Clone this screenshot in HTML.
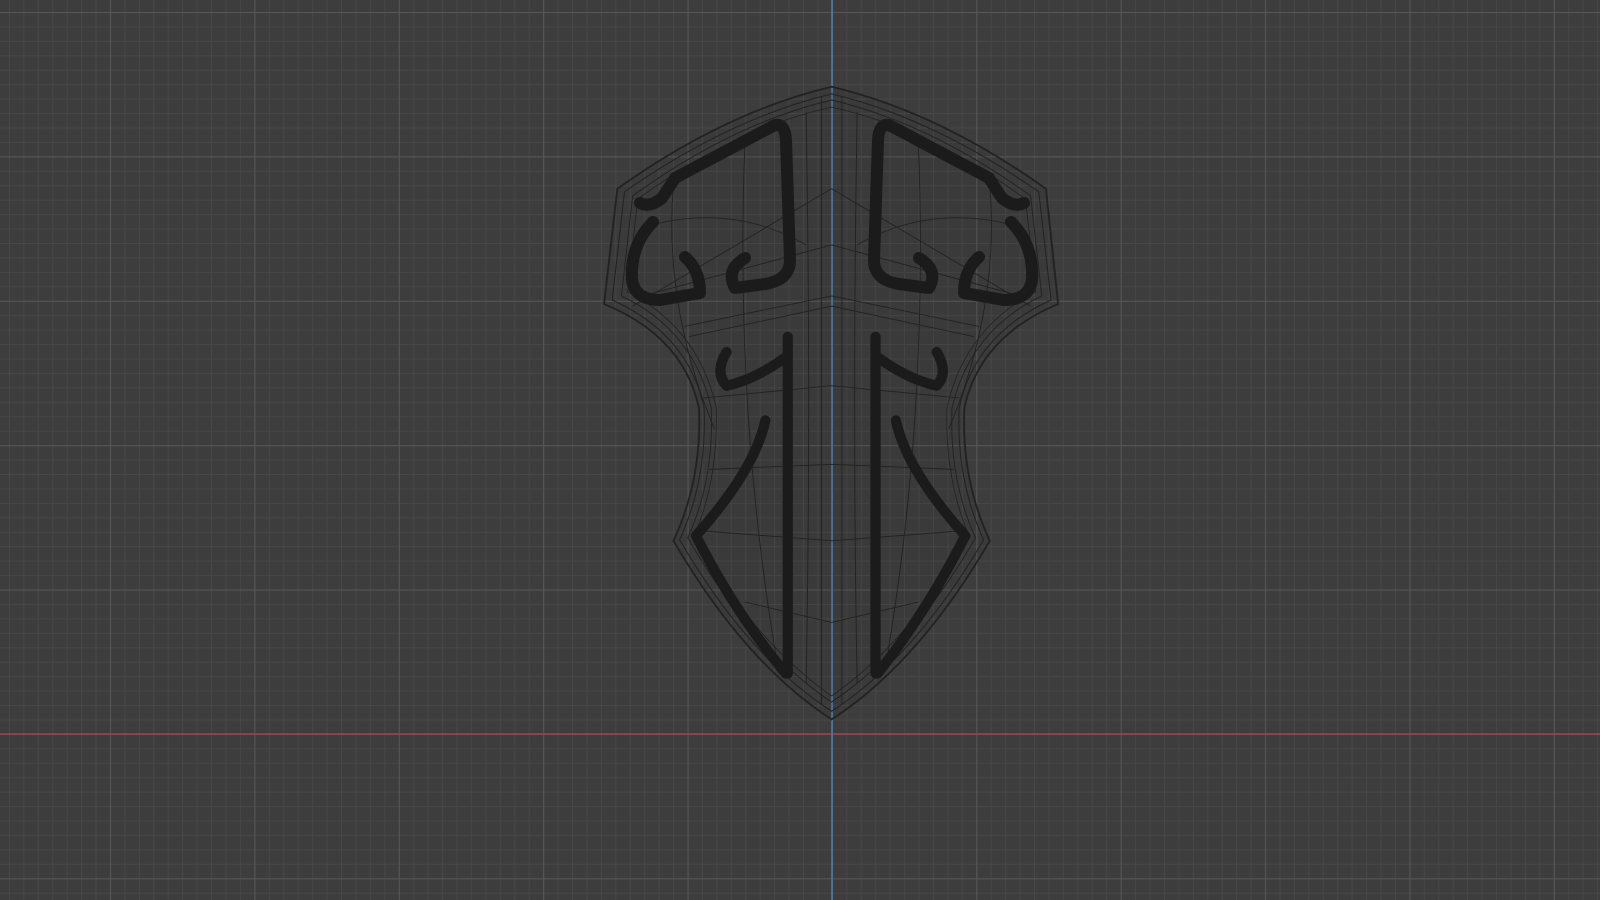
<!DOCTYPE html>
<html><head><meta charset="utf-8"><style>
html,body{margin:0;padding:0;width:1600px;height:900px;overflow:hidden;background:#3d3d3d}
.g{position:absolute;left:0;top:0;width:1600px;height:900px;
background-image:
linear-gradient(to right,#575757 1px,transparent 1px),
linear-gradient(to bottom,#575757 1px,transparent 1px),
linear-gradient(to right,#474747 1px,transparent 1px),
linear-gradient(to bottom,#474747 1px,transparent 1px);
background-size:144.4px 144.4px,144.4px 144.4px,14.44px 14.44px,14.44px 14.44px;
background-position:110px 12px,110px 12px,110px 12px,110px 12px}
svg{position:absolute;left:0;top:0}
</style></head><body>
<div class="g"></div>
<svg width="1600" height="900" viewBox="0 0 1600 900">
<line x1="0" y1="734" x2="1600" y2="734" stroke="#9a4550" stroke-width="1.5"/>
<line x1="832" y1="0" x2="832" y2="900" stroke="#4d7fae" stroke-width="1.5"/>
<g transform="scale(1.0204)" fill="none" stroke="#222">
<path d="M815,85 Q920,110 1025,185 L1037,298 Q960,330 945,400 Q942,470 970,530 Q900,650 815,705 Q730,650 660,530 Q688,470 685,400 Q670,330 592,298 L605,185 Q710,110 815,85Z" fill="rgba(0,0,0,0.04)" stroke-width="1.8"/>
<path d="M815,92 Q915,116 1018,188 L1030,294 Q955,328 940,400 Q937,470 964,529 Q897,644 815,697 Q733,644 666,529 Q693,470 690,400 Q675,328 600,294 L612,188 Q715,116 815,92Z" stroke-width="1"/>
<path d="M815,98 Q912,121 1010,192 L1021,290 Q950,324 933,400 Q930,470 956,527 Q893,636 815,688 Q737,636 674,527 Q700,470 697,400 Q680,324 609,290 L620,192 Q718,121 815,98Z" stroke-width="0.9"/>
<path d="M815,105 Q910,126 1005,195 L1015,286 Q945,322 928,400 Q926,470 950,526 Q890,630 815,682 Q740,630 680,526 Q704,470 702,400 Q685,322 615,286 L625,195 Q720,126 815,105Z" stroke-width="0.8"/>
<path d="M815,185 L1010,300 M815,185 L620,300 M815,240 L1000,290 M815,240 L630,290 M815,290 L960,320 M815,290 L670,320 M815,300 L955,330 M815,300 L675,330 M815,378 L940,390 M815,378 L690,390 M815,455 L935,460 M815,455 L695,460 M815,530 L945,520 M815,530 L685,520 M815,610 L900,590 M815,610 L730,590 M640,220 Q720,200 790,240 M990,220 Q910,200 840,240" stroke-width="0.9"/>
<path d="M805,95 L805,690 M825,95 L825,690 M790,110 Q795,400 790,670 M840,110 Q835,400 840,670 M730,140 Q720,400 760,640 M900,140 Q910,400 870,640 M660,180 Q650,300 700,420 M970,180 Q980,300 930,420" stroke-width="0.9"/>
</g>
<g fill="none" stroke="#1b1b1b" stroke-width="12" stroke-linecap="round" stroke-linejoin="round">
<path d="M640,203 Q650,208 662,198 Q670,186 675,178 L775,125 Q785,123 786,140 L790,260 Q790,280 765,284 L735,288 Q725,270 745,258"/>
<path d="M653,222 Q630,245 632,280 Q635,300 660,300 L700,293 Q700,270 685,257"/>
<path d="M1024,203 Q1014,208 1002,198 Q994,186 989,178 L889,125 Q879,123 878,140 L874,260 Q874,280 899,284 L929,288 Q939,270 919,258"/>
<path d="M1011,222 Q1034,245 1032,280 Q1029,300 1004,300 L964,293 Q964,270 979,257"/>
</g>
<g transform="scale(1.0204)" fill="none" stroke="#1b1b1b" stroke-width="10" stroke-linecap="round" stroke-linejoin="round">
<path d="M772,330 L772,660"/><path d="M858,330 L858,660"/>
<path d="M712,345 Q700,365 712,378 Q740,372 770,350"/>
<path d="M918,345 Q930,365 918,378 Q890,372 860,350"/>
<path d="M750,412 Q740,460 682,525 Q720,600 770,660"/>
<path d="M878,412 Q888,460 946,525 Q908,600 860,660"/>
</g>
</svg>
</body></html>
